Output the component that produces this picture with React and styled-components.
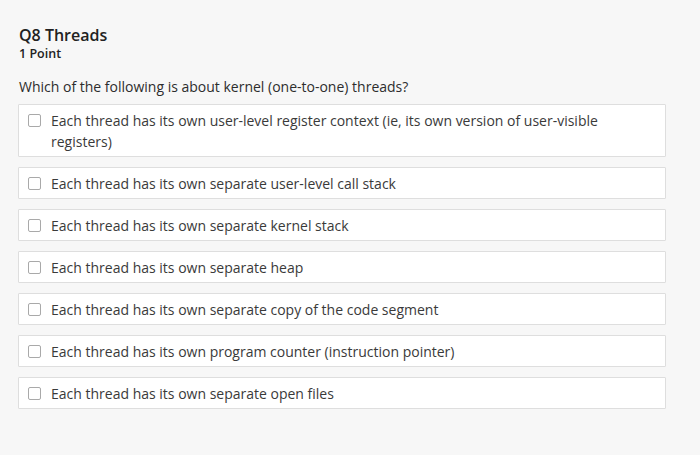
import React from "react";
import styled, { createGlobalStyle } from "styled-components";

const Global = createGlobalStyle`
  html, body { margin: 0; padding: 0; background: #f7f7f7; }
  body { font-family: "Open Sans", "Noto Sans", sans-serif; color: #2d2d2d; }
`;

const Page = styled.div`
  width: 700px;
  height: 455px;
  box-sizing: border-box;
  padding: 24px 34px 0 18px;
  background: #f7f7f7;
`;

const Title = styled.h2`
  margin: 0 0 0 1px;
  font-size: 16px;
  font-weight: 600;
  line-height: 22px;
  color: #222;
`;

const Points = styled.div`
  margin: 0 0 0 1px;
  font-size: 12.5px;
  font-weight: 600;
  line-height: 16px;
  color: #222;
`;

const Question = styled.p`
  margin: 15px 0 7px 1px;
  font-size: 14px;
  line-height: 20px;
  color: #2d2d2d;
`;

const Options = styled.div`
  display: flex;
  flex-direction: column;
  gap: 10px;
`;

const Option = styled.label`
  display: flex;
  align-items: flex-start;
  gap: 10px;
  box-sizing: border-box;
  min-height: 32px;
  padding: 5px 14px 4px 9px;
  background: #fff;
  border: 1px solid #dedede;
  border-radius: 1px;
  font-size: 14px;
  line-height: 21px;
  color: #3a3a3a;
`;

const Box = styled.span`
  flex: none;
  width: 11px;
  height: 11px;
  margin-top: 4px;
  border: 1px solid #a9a9a9;
  border-radius: 2px;
  background: #fff;
`;

const Text = styled.span`
  flex: 1;
`;

const options = [
  "Each thread has its own user-level register context (ie, its own version of user-visible registers)",
  "Each thread has its own separate user-level call stack",
  "Each thread has its own separate kernel stack",
  "Each thread has its own separate heap",
  "Each thread has its own separate copy of the code segment",
  "Each thread has its own program counter (instruction pointer)",
  "Each thread has its own separate open files",
];

export default function App() {
  return (
    <>
      <Global />
      <Page>
        <Title>Q8 Threads</Title>
        <Points>1 Point</Points>
        <Question>Which of the following is about kernel (one-to-one) threads?</Question>
        <Options>
          {options.map((o) => (
            <Option key={o}>
              <Box />
              <Text>{o}</Text>
            </Option>
          ))}
        </Options>
      </Page>
    </>
  );
}
